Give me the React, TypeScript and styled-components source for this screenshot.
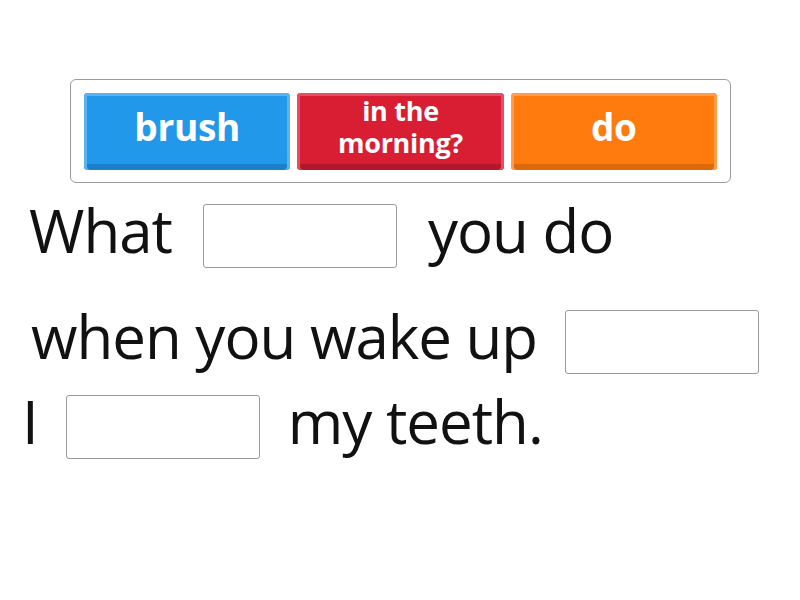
import React from "react";
import styled, { createGlobalStyle } from "styled-components";

const GlobalStyle = createGlobalStyle`
  html, body {
    margin: 0;
    padding: 0;
    background: #ffffff;
  }
  body {
    font-family: "Open Sans", "Noto Sans", sans-serif;
  }
`;

const Page = styled.div`
  width: 800px;
  height: 600px;
  padding-top: 79px;
  box-sizing: border-box;
  display: flex;
  flex-direction: column;
`;

const Tray = styled.div`
  margin-left: 70px;
  width: 661px;
  height: 104px;
  box-sizing: border-box;
  border: 1px solid #9b9b9b;
  border-radius: 6px;
  padding: 13px 13px 0 13px;
  display: flex;
  gap: 7px;
`;

type TileColor = { main: string; light: string; dark: string };

const palette: Record<string, TileColor> = {
  blue: { main: "#2198e9", light: "#5ab4f2", dark: "#1a80c9" },
  red: { main: "#d91d33", light: "#e4505f", dark: "#b5172a" },
  orange: { main: "#ff7b0d", light: "#ff9d4a", dark: "#dc680a" },
};

const Tile = styled.div<{ $c: TileColor; $small?: boolean }>`
  width: 207px;
  height: 77px;
  box-sizing: border-box;
  border-radius: 4px;
  background: ${(p) => p.$c.main};
  box-shadow: inset 0 3px 0 ${(p) => p.$c.light},
    inset 3px 0 0 ${(p) => p.$c.light}, inset -3px 0 0 ${(p) => p.$c.light},
    inset 0 -6px 0 ${(p) => p.$c.dark};
  padding-bottom: 9px;
  display: flex;
  align-items: center;
  justify-content: center;
  text-align: center;
  color: #ffffff;
  font-family: "Open Sans", "Noto Sans", sans-serif;
  font-weight: 700;
  font-size: ${(p) => (p.$small ? "27px" : "37px")};
  line-height: ${(p) => (p.$small ? "32px" : "44px")};
  letter-spacing: ${(p) => (p.$small ? "-0.3px" : "-0.3px")};
`;

const Paragraph = styled.div<{ $top: number }>`
  margin-top: ${(p) => p.$top}px;
  display: flex;
  flex-direction: column;
  gap: 42px;
`;

const Row = styled.div<{ $indent: number; $gap: number }>`
  display: flex;
  align-items: center;
  height: 64px;
  gap: ${(p) => p.$gap}px;
  padding-left: ${(p) => p.$indent}px;
`;

const Word = styled.span`
  font-family: "Open Sans", "Noto Sans", sans-serif;
  font-size: 60px;
  line-height: 64px;
  letter-spacing: -1px;
  color: #111111;
  white-space: pre;
  padding-bottom: 12px;
`;

const Blank = styled.div`
  width: 194px;
  height: 64px;
  box-sizing: border-box;
  border: 1px solid #9a9a9a;
  border-radius: 3px;
  background: #ffffff;
  flex: none;
`;

export default function App() {
  return (
    <>
      <GlobalStyle />
      <Page>
        <Tray>
          <Tile $c={palette.blue}>brush</Tile>
          <Tile $c={palette.red} $small>
            in the
            <br />
            morning?
          </Tile>
          <Tile $c={palette.orange}>do</Tile>
        </Tray>
        <Paragraph $top={21}>
          <Row $indent={29} $gap={31}>
            <Word>What</Word>
            <Blank />
            <Word>you do</Word>
          </Row>
          <Row $indent={31} $gap={28}>
            <Word>when you wake up</Word>
            <Blank />
          </Row>
        </Paragraph>
        <Paragraph $top={21}>
          <Row $indent={22} $gap={28}>
            <Word>I</Word>
            <Blank />
            <Word>my teeth.</Word>
          </Row>
        </Paragraph>
      </Page>
    </>
  );
}
